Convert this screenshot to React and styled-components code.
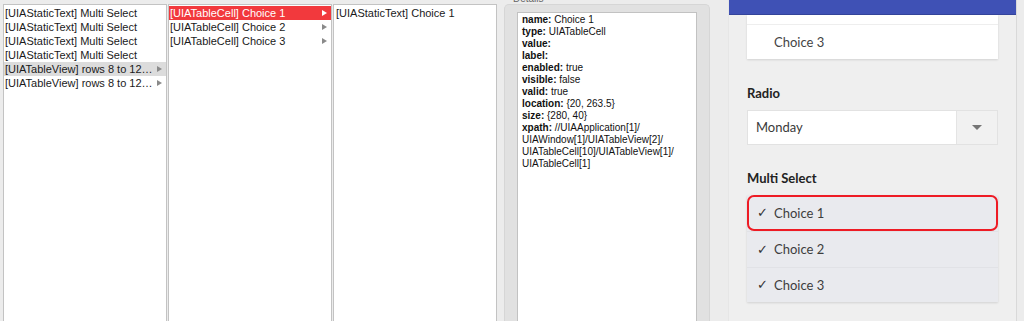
import React from "react";
import styled, { createGlobalStyle } from "styled-components";

const GlobalStyle = createGlobalStyle`
	html, body {
		margin: 0;
		padding: 0;
		background: #ececec;
	}
	body {
		font-family: "Liberation Sans", Arial, sans-serif;
	}
`;

const Screen = styled.div`
	display: flex;
	width: 1024px;
	height: 321px;
	overflow: hidden;
	background: #ececec;
	padding-left: 3px;
	box-sizing: border-box;
`;

// Element browser (three columns)
const Browser = styled.div`
	display: flex;
	gap: 1px;
	padding-top: 4px;
`;

const Column = styled.ul`
	margin: 0;
	padding: 1px 0 0;
	width: 164px;
	box-sizing: border-box;
	background: #fff;
	border: 1px solid #c3c3c3;
	border-bottom: 0;
	list-style: none;
`;

const Row = styled.li`
	position: relative;
	height: 14px;
	line-height: 14px;
	padding-left: ${p => (p.$inset ? 2 : 1)}px;
	font-size: 11px;
	white-space: nowrap;
	overflow: hidden;
	color: ${p => (p.$state === "active" ? "#fff" : "#1a1a1a")};
	background: ${p =>
		p.$state === "active"
			? "#f2393d"
			: p.$state === "selected"
			? "#dcdcdc"
			: "transparent"};
`;

const Arrow = styled.span`
	position: absolute;
	right: 4px;
	top: 4px;
	width: 0;
	height: 0;
	border-top: 3px solid transparent;
	border-bottom: 3px solid transparent;
	border-left: 5px solid ${p => (p.$light ? "#fff" : "#8a8a8a")};
`;

// Details inspector
const DetailsColumn = styled.div`
	display: flex;
	flex-direction: column;
	margin-left: 7px;
	width: 206px;
`;

const DetailsLegend = styled.div`
	height: 4px;
	font-size: 10px;
	line-height: 4px;
	color: #666;
	padding-left: 9px;
	overflow: visible;
	margin-top: -3px;
	margin-bottom: 3px;
`;

const Group = styled.div`
	flex: 1;
	background: #e1e1e1;
	border: 1px solid #d6d6d6;
	border-bottom: 0;
	border-radius: 5px 5px 0 0;
	padding: 7px 12px 0;
	display: flex;
`;

const DetailsBox = styled.div`
	flex: 1;
	background: #fff;
	border: 1px solid #c2c2c2;
	border-bottom: 0;
	padding: 1px 4px;
	font-size: 10px;
	line-height: 12px;
	color: #111;
	white-space: nowrap;
	& b {
		font-weight: bold;
	}
`;

// Simulator
const Phone = styled.div`
	margin-left: 18px;
	width: 289px;
	background: #efefef;
	border-left: 1px solid #e6e6e6;
	border-right: 1px solid #d9d9d9;
	box-sizing: border-box;
	font-family: Lato, "Open Sans", sans-serif;
`;

const NavBar = styled.div`
	height: 44px;
	margin-top: -29px;
	background: #3f51b5;
	border-bottom: 1px solid #34449b;
	color: #fff;
	display: flex;
	align-items: flex-end;
	justify-content: space-between;
	padding: 0 12px 12px;
	box-sizing: border-box;
	font-size: 17px;
	font-weight: bold;
	line-height: 17px;
`;

const NavAction = styled.span`
	font-weight: normal;
	font-size: 15px;
`;

const PhoneBody = styled.div`
	padding: 0 18px;
`;

const Card = styled.div`
	background: #fff;
	box-shadow: 0 1px 2px rgba(0, 0, 0, 0.12);
`;

const CardRow = styled.div`
	height: ${p => p.$h}px;
	line-height: ${p => p.$h}px;
	padding-left: 27px;
	font-size: 13px;
	color: #444;
	border-top: ${p => (p.$divider ? "1px solid #eeeeee" : "0")};
`;

const Label = styled.div`
	font-size: 13px;
	font-weight: bold;
	color: #222;
	line-height: 16px;
	margin: ${p => p.$top}px 0 9px;
`;

const Select = styled.div`
	display: flex;
	height: 35px;
	background: #fff;
	border: 1px solid #e2e2e2;
	box-sizing: border-box;
`;

const SelectValue = styled.div`
	flex: 1;
	padding-left: 8px;
	line-height: 33px;
	font-size: 13px;
	color: #3a3a3a;
`;

const SelectButton = styled.div`
	width: 40px;
	background: #f1f1f1;
	border-left: 1px solid #e4e4e4;
	display: flex;
	align-items: center;
	justify-content: center;
	&::after {
		content: "";
		border-left: 5px solid transparent;
		border-right: 5px solid transparent;
		border-top: 5px solid #757575;
	}
`;

const MultiList = styled.div`
	background: #e9eaee;
	box-shadow: 0 1px 2px rgba(0, 0, 0, 0.12);
`;

const MultiRow = styled.div`
	display: flex;
	align-items: center;
	height: ${p => p.$h}px;
	box-sizing: border-box;
	padding-bottom: 1px;
	font-size: 13px;
	color: #3d3d3d;
	padding-left: ${p => (p.$focused ? 8 : 10)}px;
	border: ${p => (p.$focused ? "2px solid #ee1b24" : "0")};
	border-radius: ${p => (p.$focused ? "7px" : "0")};
	border-top: ${p =>
		p.$focused ? "2px solid #ee1b24" : "1px solid #e1e2e6"};
`;

const Check = styled.span`
	width: 17px;
	font-size: 13px;
	font-weight: bold;
	color: #333;
	font-family: "DejaVu Sans", sans-serif;
`;

const browserCol1 = [
	{ text: "[UIAStaticText] Multi Select" },
	{ text: "[UIAStaticText] Multi Select" },
	{ text: "[UIAStaticText] Multi Select" },
	{ text: "[UIAStaticText] Multi Select" },
	{ text: "[UIATableView] rows 8 to 12…", arrow: true, state: "selected" },
	{ text: "[UIATableView] rows 8 to 12…", arrow: true },
];

const browserCol2 = [
	{ text: "[UIATableCell] Choice 1", arrow: true, state: "active" },
	{ text: "[UIATableCell] Choice 2", arrow: true },
	{ text: "[UIATableCell] Choice 3", arrow: true },
];

const details = [
	["name:", "Choice 1"],
	["type:", "UIATableCell"],
	["value:", ""],
	["label:", ""],
	["enabled:", "true"],
	["visible:", "false"],
	["valid:", "true"],
	["location:", "{20, 263.5}"],
	["size:", "{280, 40}"],
];

const choices = [
	{ label: "Choice 1", h: 36, focused: true },
	{ label: "Choice 2", h: 36 },
	{ label: "Choice 3", h: 35 },
];

function BrowserColumn({ rows }) {
	return (
		<Column>
			{rows.map((r, i) => (
				<Row key={i} $state={r.state}>
					{r.text}
					{r.arrow && <Arrow $light={r.state === "active"} />}
				</Row>
			))}
		</Column>
	);
}

export default function App() {
	return (
		<>
			<GlobalStyle />
			<Screen>
				<Browser>
					<BrowserColumn rows={browserCol1} />
					<BrowserColumn rows={browserCol2} />
					<Column>
						<Row $inset>[UIAStaticText] Choice 1</Row>
					</Column>
				</Browser>

				<DetailsColumn>
					<DetailsLegend>Details</DetailsLegend>
					<Group>
						<DetailsBox>
							{details.map(([k, v]) => (
								<div key={k}>
									<b>{k}</b> {v}
								</div>
							))}
							<div>
								<b>xpath:</b> //UIAApplication[1]/
							</div>
							<div>UIAWindow[1]/UIATableView[2]/</div>
							<div>UIATableCell[10]/UIATableView[1]/</div>
							<div>UIATableCell[1]</div>
						</DetailsBox>
					</Group>
				</DetailsColumn>

				<Phone>
					<NavBar>
						<span>‹</span>
						<span>Form</span>
						<NavAction>Next</NavAction>
					</NavBar>
					<PhoneBody>
						<Card>
							<CardRow $h={9} />
							<CardRow $h={34} $divider>
								Choice 3
							</CardRow>
						</Card>

						<Label $top={26}>Radio</Label>
						<Select>
							<SelectValue>Monday</SelectValue>
							<SelectButton />
						</Select>

						<Label $top={25}>Multi Select</Label>
						<MultiList>
							{choices.map(c => (
								<MultiRow key={c.label} $h={c.h} $focused={c.focused}>
									<Check>✓</Check>
									{c.label}
								</MultiRow>
							))}
						</MultiList>
					</PhoneBody>
				</Phone>
			</Screen>
		</>
	);
}
